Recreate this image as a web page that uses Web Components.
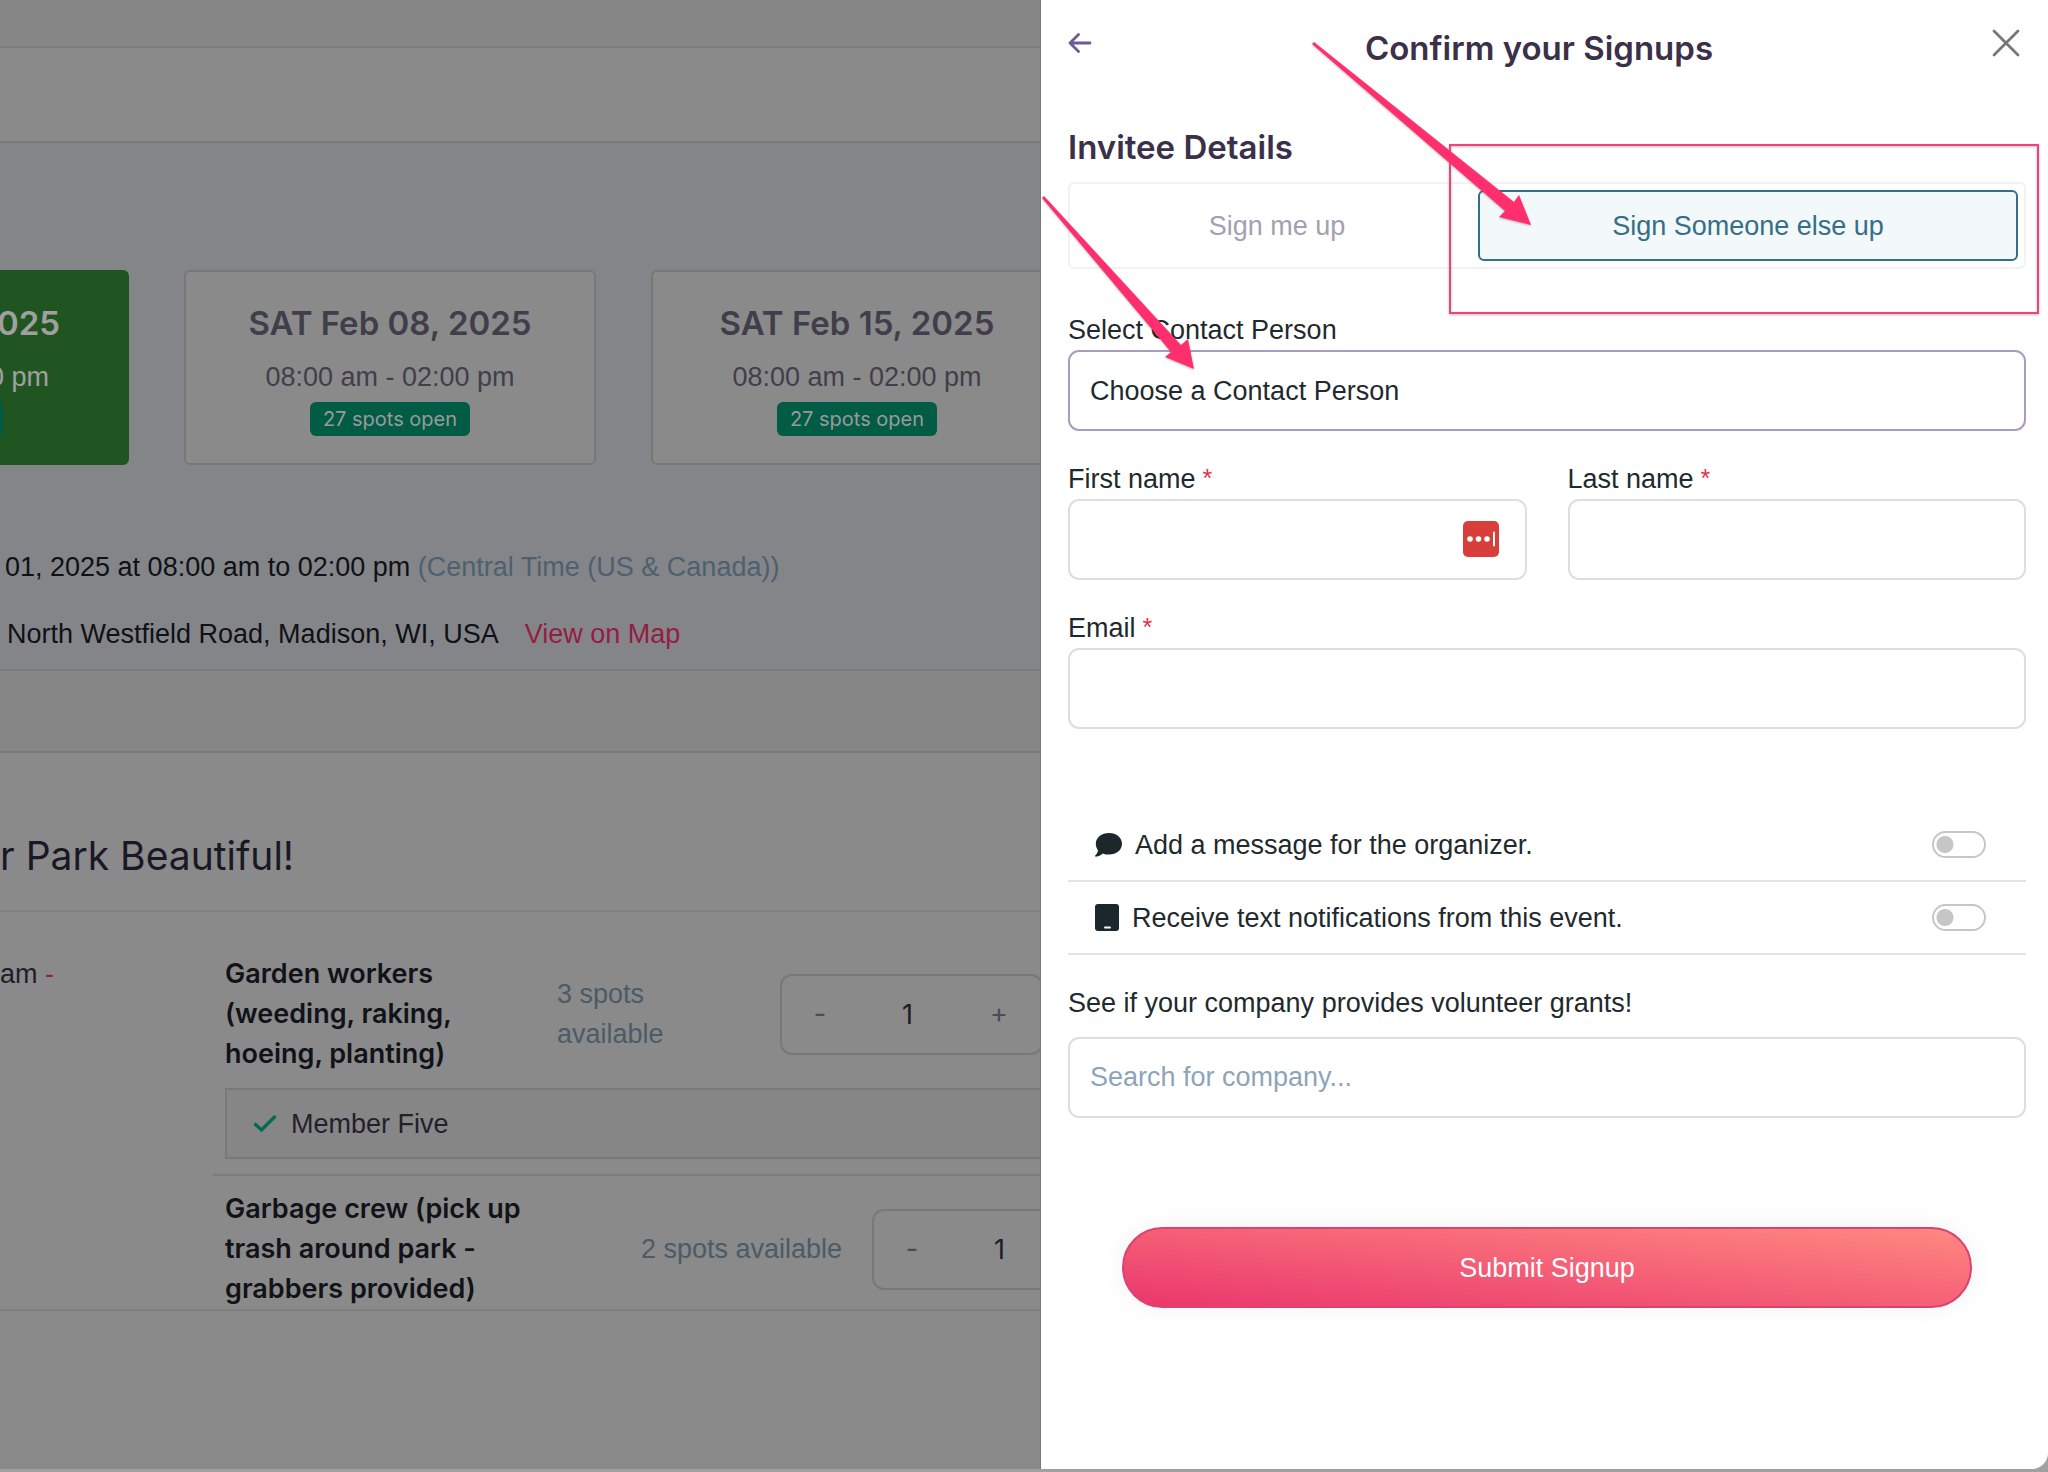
<!DOCTYPE html>
<html lang="en">
<head>
<meta charset="utf-8">
<title>Confirm your Signups</title>
<style>
html, body { margin: 0; height: 100%; background: #a0a0a0; }
body { font: 27px/40px "Liberation Sans", Arial, sans-serif; color: #1f2a2e; --display: Inter, "Liberation Sans", sans-serif; }
</style>
</head>
<body>
<signup-page></signup-page>
<script>
const define = (name, html, setup) => {
  const tpl = document.createElement('template');
  tpl.innerHTML = `<style>:host{display:block}*{box-sizing:border-box}button,input,select{font:inherit;color:inherit;margin:0}button{cursor:pointer;padding:0;border:0;background:none}</style>` + html;
  customElements.define(name, class extends HTMLElement {
    connectedCallback() {
      if (this.shadowRoot) return;
      const root = this.attachShadow({ mode: 'open' });
      root.append(tpl.content.cloneNode(true));
      if (setup) setup(root, this);
    }
  });
};

define('signup-page', `
<style>
:host{display:grid;grid-template-columns:1040fr 1008fr;min-height:100vh;box-sizing:border-box;border-bottom:3px solid #a0a0a0}
event-backdrop{min-width:0}
</style>
<event-backdrop></event-backdrop>
<signup-drawer></signup-drawer>`);

define('date-card', `
<style>
:host{flex:none;width:412px;height:195px;box-sizing:border-box;padding-top:29px;border:2px solid #76777c;border-radius:6px;background:#8a8a8a;color:#403f4b;text-align:center}
.day{font:600 33px/44px var(--display);color:#3f3e4a;display:block}
.time{display:block;line-height:44px;margin-top:10px}
.open{display:inline-block;margin-top:3px;padding:0 13px;border-radius:6px;background:#005c45;color:#9a9a9a;font:400 20px/34px var(--display);vertical-align:top}
:host([current]){width:129px;border-color:#205522;border-radius:0 6px 6px 0;background:#205522;color:#a0a0a0;border-left:0}
:host([current]) .day,:host([current]) .time{display:flex;justify-content:flex-end;white-space:pre;color:#a0a0a0;padding-right:67px}
:host([current]) .time{padding-right:78px}
:host([current]) .open{display:block;width:3px;height:34px;padding:0;border-radius:0 4px 4px 0}
</style>
<span class="day"><slot name="day"></slot></span><span class="time"><slot name="time"></slot></span><span class="open"><slot></slot></span>`);

define('spot-stepper', `
<style>
:host{flex:none;display:flex;width:263px;height:81px;box-sizing:border-box;border:2px solid #787878;border-radius:12px;color:#4b4c50}
button{width:76px;flex:none;font-family:var(--display)}
.more{width:84px}
:host([clipped]) .more{visibility:hidden}
input{flex:1;min-width:0;width:0;border:0;background:none;text-align:center;font:400 27px var(--display);color:#1d1d23;padding:0;outline:0}
</style>
<button type="button" aria-label="Fewer spots">-</button><input value="1" aria-label="Spots"><button class="more" type="button" aria-label="More spots">+</button>`);

define('slot-row', `
<style>
:host{display:flex;align-items:center}
.name{flex:none;width:332px;padding-right:82px;font:600 27px/40px var(--display);color:#111318}
.left{flex:none;width:223px;padding-right:90px;color:#4c5b68}
:host([wide]) .name{width:416px;padding-right:110px}
:host([wide]) .left{width:231px;padding-right:0}
</style>
<div class="name"><slot></slot></div><div class="left"><slot name="left"></slot></div><spot-stepper></spot-stepper>`, (root, el) => {
  root.querySelector('spot-stepper').toggleAttribute('clipped', el.hasAttribute('wide'));
});

define('event-backdrop', `
<style>
:host{display:flex;flex-direction:column;overflow:hidden;background:#8a8a8a;white-space:nowrap}
.bar{height:48px;background:#868686;border-bottom:2px solid #7b7b7b}
.nav{height:95px;border-bottom:2px solid #7b7b7b}
.info{background:#848589;padding:127px 0 15px;border-bottom:2px solid #7a7a80;color:#0f1115}
.dates{display:flex;gap:55px}
p{margin:0}
.when{margin-top:82px;padding-left:5px}
.where{margin-top:27px;padding-left:7px}
.zone{color:#4e606e}
a{color:#951c42;text-decoration:none;margin-left:20px}
.gap{height:82px;background:#868686;border-bottom:2px solid #7a7a7a}
h2{margin:0;padding:77px 0 28px;border-bottom:2px solid #818181;font:400 39px/52px var(--display);color:#1a1727}
.table{display:flex;padding-top:42px;border-bottom:2px solid #808080}
.hour{flex:none;width:213px;color:#1f1d29}
.hour span{color:#951c42}
.slots{flex:1;min-width:0;white-space:normal}
slot-row{padding-left:12px}
.member{display:flex;align-items:center;gap:14px;height:71px;margin:14px 0 15px 12px;padding-left:26px;border:2px solid #797979;border-right:0;background:#868686;color:#241f2b}
hr{border:0;border-top:2px solid #7c7c7c;margin:0 0 13px}
</style>
<div class="bar"></div><div class="nav"></div>
<section class="info">
<div class="dates">
<date-card current><span slot="day">025</span><span slot="time">0 pm</span></date-card>
<date-card><span slot="day">SAT Feb 08, 2025</span><span slot="time">08:00 am - 02:00 pm</span>27 spots open</date-card>
<date-card><span slot="day">SAT Feb 15, 2025</span><span slot="time">08:00 am - 02:00 pm</span>27 spots open</date-card>
</div>
<p class="when">01, 2025 at 08:00 am to 02:00 pm <span class="zone">(Central Time (US &amp; Canada))</span></p>
<p class="where">North Westfield Road, Madison, WI, USA <a href="#map">View on Map</a></p>
</section>
<div class="gap"></div>
<h2>r Park Beautiful!</h2>
<div class="table">
<div class="hour">am <span>-</span></div>
<div class="slots">
<slot-row>Garden workers (weeding, raking, hoeing, planting)<span slot="left">3 spots available</span></slot-row>
<div class="member"><svg width="24" height="19" viewBox="0 0 24 19" fill="none" stroke="#006b50" stroke-width="3.4"><path d="M1.5 9.5 8.5 16 22.5 2"/></svg>Member Five</div>
<hr>
<slot-row wide>Garbage crew (pick up trash around park - grabbers provided)<span slot="left">2 spots available</span></slot-row>
</div>
</div>`);

define('form-field', `
<style>
label{display:block;height:40px;line-height:40px}
b{font-weight:400;font-size:25px;line-height:24px;color:#dc3545;margin-left:7px;vertical-align:1px}
.box{position:relative}
input,select{display:block;width:100%;height:81px;border:2px solid #dedede;border-radius:11px;background:#fff;padding:0 20px;appearance:none;outline:0}
select{border-color:#a89dbf}
input::placeholder{color:#8ea4b8;opacity:1}
:host([spaced]) label{margin-bottom:14px}
svg{position:absolute;right:28px;top:22px}
</style>
<label for="f"></label><div class="box"></div>`, (root, el) => {
  const label = root.querySelector('label'), box = root.querySelector('.box');
  label.textContent = el.getAttribute('label');
  if (el.hasAttribute('required')) {
    const star = document.createElement('b');
    star.textContent = '*';
    label.append(star);
  }
  let control;
  if (el.hasAttribute('choice')) {
    control = document.createElement('select');
    control.append(new Option(el.getAttribute('choice')));
  } else {
    control = document.createElement('input');
    control.type = el.getAttribute('type') || 'text';
    control.placeholder = el.getAttribute('hint') || '';
  }
  control.id = 'f';
  box.append(control);
  if (el.hasAttribute('vault')) box.insertAdjacentHTML('beforeend',
    '<svg width="36" height="36" viewBox="0 0 36 36"><rect width="36" height="36" rx="5" fill="#d93f3a"/><g fill="#fff"><circle cx="7" cy="18" r="2.8"/><circle cx="15.500" cy="18" r="2.800"/><circle cx="24" cy="18" r="2.800"/><rect x="30" y="10.500" width="2" height="15" rx="1"/></g></svg>');
});

define('toggle-row', `
<style>
:host{border-bottom:2px solid #e4e4e4}
label{display:flex;align-items:center;height:71px;padding:0 40px 0 27px}
slot[name=icon]::slotted(svg){display:block;margin-right:13px}
span{flex:1}
input{appearance:none;width:54px;height:27px;border:2px solid #c6c6c6;border-radius:14px;background:radial-gradient(circle at 11px 50%,#c6c6c6 8px,#fff 9px)}
</style>
<label><slot name="icon"></slot><span><slot></slot></span><input type="checkbox"></label>`, (root, el) => {
  root.querySelector('input').setAttribute('aria-label', el.textContent.trim());
});

define('pointer-notes', `
<style>
:host{position:absolute;left:0;top:0;width:1007px;height:400px;pointer-events:none}
svg{display:block;overflow:visible;filter:drop-shadow(0 1px 1px #0004)}
</style>
<svg width="1007" height="400" viewBox="1041 0 1007 400" aria-hidden="true">
<rect x="1450" y="145" width="588" height="168" fill="none" stroke="#f0437c" stroke-width="2"/>
<g fill="#ff2f6d">
<path d="M1312 44 1314 42 1514 202 1519 195 1531 225 1499 217 1505 211Z"/>
<path d="M1042 198 1044 196 1181 345 1188 339 1194 369 1165 357 1171 352Z"/>
</g></svg>`);

define('signup-drawer', `
<style>
:host{position:relative;box-sizing:border-box;padding:0 22px 0 27px;border-left:1px solid #77777b;background:#fff;border-radius:0 0 16px 0}
header{display:flex;align-items:center;justify-content:space-between;height:96px}
header button{height:86px;display:flex;align-items:center;align-self:flex-start}
.back{width:24px}
.close{width:40px;justify-content:center}
h1,h3{margin:0;font:600 33px/44px var(--display);color:#3b3049}
h3{margin:29px 0 13px}
.tabs{display:flex;height:87px;padding:6px;border:2px solid #f2f2f3;border-radius:6px}
.tabs button{flex:3;color:#a3a0b2}
.tabs .on{flex:4;border:2px solid #356f85;border-radius:6px;background:#f3f8fa;color:#356f85}
form{display:flex;flex-direction:column;gap:28px;margin-top:41px}
.pair{display:flex;gap:41px}
.pair>*{flex:1}
.toggles{margin-top:52px}
.submit{height:81px;margin:81px 54px 0;border:2px solid #d9436f;border-radius:41px;background:linear-gradient(to top right,#ea356d,#ff8a80);background-origin:border-box;color:#fff;box-shadow:0 0 26px #0000000f}
</style>
<header>
<button class="back" type="button" aria-label="Back"><svg width="24" height="20" viewBox="0 0 24 20" fill="none" stroke="#6d5b93" stroke-width="2.800" stroke-linecap="round" stroke-linejoin="round"><path d="M22 10H2M10.500 1.500 2 10l8.500 8.500"/></svg></button>
<h1>Confirm your Signups</h1>
<button class="close" type="button" aria-label="Close"><svg width="28" height="28" viewBox="0 0 28 28" fill="none" stroke="#777" stroke-width="2.800" stroke-linecap="round"><path d="M2 2 26 26M26 2 2 26"/></svg></button>
</header>
<h3>Invitee Details</h3>
<div class="tabs"><button type="button">Sign me up</button><button class="on" type="button">Sign Someone else up</button></div>
<form>
<form-field label="Select Contact Person" choice="Choose a Contact Person"></form-field>
<div class="pair"><form-field label="First name" required vault></form-field><form-field label="Last name" required></form-field></div>
<form-field label="Email" type="email" required></form-field>
<div class="toggles">
<toggle-row><svg slot="icon" width="27" height="24" viewBox="0 0 27 24" fill="#1c272c"><path d="M14 0C21.500 0 27 4.600 27 10.800S21.500 21.600 14 21.600c-2.300 0-4.300-.4-6.100-1.200C5.800 22.200 3.200 23.600.4 23.600c-.5 0-.6-.6-.2-1 1.400-1.300 2.500-3.200 2.800-5.200C1.600 15.500.8 13.300.8 10.800.8 4.600 6.500 0 14 0Z"/></svg>Add a message for the organizer.</toggle-row>
<toggle-row><svg slot="icon" width="24" height="27" viewBox="0 0 24 27"><rect width="24" height="27" rx="3" fill="#1c272c"/><rect x="9" y="22.500" width="7" height="2" rx="1" fill="#fff"/></svg>Receive text notifications from this event.</toggle-row>
</div>
<form-field spaced label="See if your company provides volunteer grants!" hint="Search for company..."></form-field>
<button class="submit" type="button">Submit Signup</button>
</form>
<pointer-notes></pointer-notes>`);
</script>
</body>
</html>
